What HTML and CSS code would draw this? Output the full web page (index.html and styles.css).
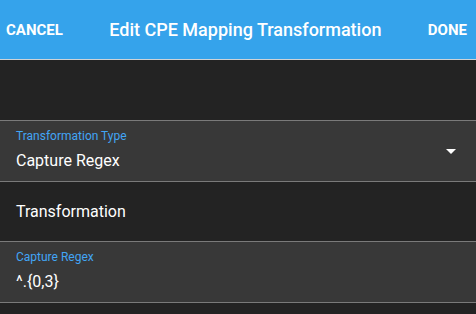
FILE: index.html
```html
<!DOCTYPE html>
<html>
<head>
<meta charset="utf-8">
<link rel="stylesheet" href="styles.css">
</head>
<body>
<header class="bar">
  <span class="btn">CANCEL</span>
  <span class="title">Edit CPE Mapping Transformation</span>
  <span class="btn">DONE</span>
</header>
<div class="row spacer"></div>
<div class="row field">
  <div class="field-text">
    <div class="label">Transformation Type</div>
    <div class="value">Capture Regex</div>
  </div>
  <svg class="caret" width="10" height="5" viewBox="0 0 10 5"><path d="M0 0h10L5 5z" fill="#fff"/></svg>
</div>
<div class="row section">Transformation</div>
<div class="row field">
  <div class="field-text">
    <div class="label">Capture Regex</div>
    <div class="value">^.{0,3}</div>
  </div>
</div>
</body>
</html>
```
FILE: styles.css
```css
html, body {
  margin: 0;
  padding: 0;
  background: #232323;
  font-family: Roboto, "Noto Sans", sans-serif;
  color: #fff;
}
.bar {
  height: 59px;
  background: #35a3eb;
  border-bottom: 1px solid #cfd3d6;
  display: flex;
  align-items: center;
  justify-content: space-between;
  padding: 0 9px 0 6px;
  box-sizing: content-box;
}
.btn {
  font-size: 15px;
  font-weight: 700;
}
.title {
  font-size: 18px;
  font-weight: 500;
}
.row {
  box-sizing: border-box;
  border-bottom: 1px solid #7a7a7a;
}
.spacer {
  height: 61px;
}
.field {
  height: 61px;
  background: #383838;
  display: flex;
  align-items: flex-start;
  justify-content: space-between;
  padding: 8px 20px 0 16px;
}
.field-text {
  display: flex;
  flex-direction: column;
  gap: 8px;
}
.label {
  font-size: 12px;
  color: #42a5f5;
  line-height: 14px;
}
.value {
  font-size: 16px;
  line-height: 19px;
}
.caret {
  margin-top: 20px;
}
.section {
  height: 60px;
  display: flex;
  align-items: center;
  padding-left: 16px;
  font-size: 16px;
}
```
